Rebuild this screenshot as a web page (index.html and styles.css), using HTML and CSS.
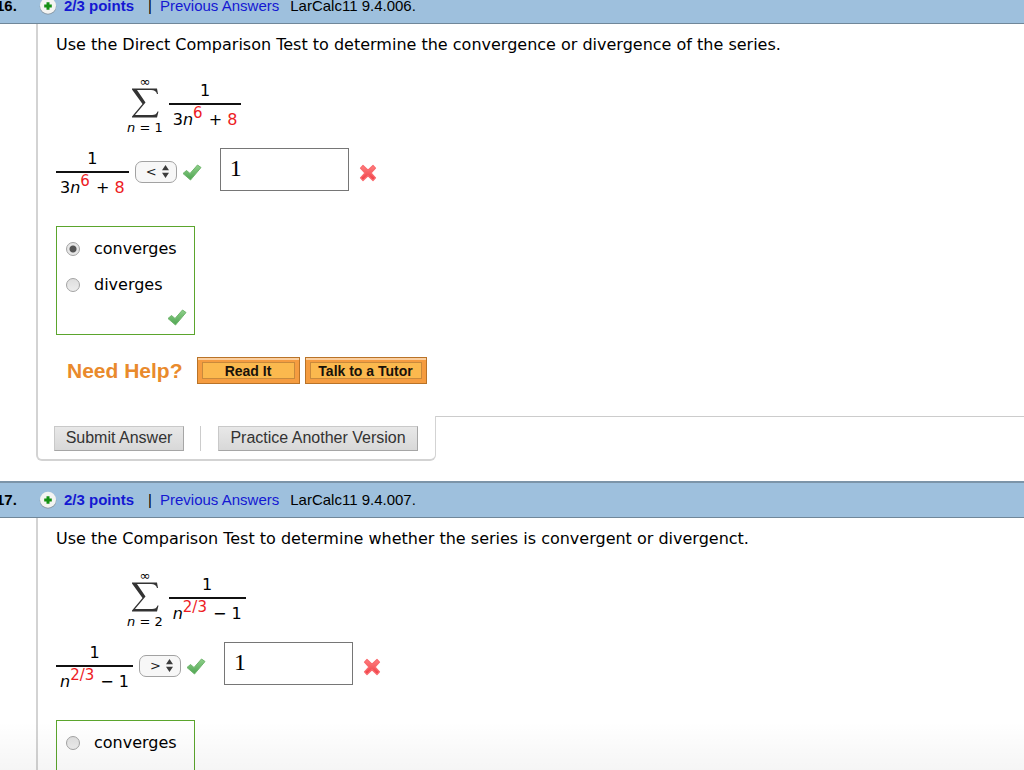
FILE: index.html
```html
<!DOCTYPE html>
<html lang="en">
<head>
<meta charset="utf-8">
<title>LarCalc11 9.4</title>
<link rel="stylesheet" href="styles.css">
</head>
<body>
<svg class="defs" width="0" height="0" aria-hidden="true">
  <defs>
    <linearGradient id="green" x1="0" y1="0" x2="0" y2="1"><stop offset="0" stop-color="#8fd08a"/><stop offset="1" stop-color="#4fa552"/></linearGradient>
    <linearGradient id="red" x1="0" y1="0" x2="0" y2="1"><stop offset="0" stop-color="#ff8080"/><stop offset="1" stop-color="#ee3e44"/></linearGradient>
    <symbol id="check" viewBox="0 0 20 17"><path d="M1 9.5 L4.5 6.5 L8 9.5 L15.5 1 L19 3.5 L8.5 16 Z" fill="url(#green)" stroke="#6fb56c" stroke-width="1" stroke-linejoin="round"/></symbol>
    <symbol id="cross" viewBox="0 0 17 18"><path d="M3.5 1.5 L8.5 6.2 L13.5 1.5 L16 4.2 L11.5 9 L16 13.8 L13.5 16.5 L8.5 11.8 L3.5 16.5 L1 13.8 L5.5 9 L1 4.2 Z" fill="url(#red)" stroke="#fa6a6e" stroke-width="1.2" stroke-linejoin="round"/></symbol>
    <symbol id="sigma" viewBox="0 0 28 30"><path d="M1 .5 H26 L27 6 H26 Q25 2 20 2 H6 L14.5 14.5 L4 27 H21 Q25.5 27 26.5 23.5 H27.5 L26 29.5 H1 V28.5 L11.5 16 L1 1.5 Z" fill="#333"/></symbol>
    <symbol id="plus" viewBox="0 0 18 18"><circle cx="9" cy="9.5" r="8.3" fill="#8c9caa"/><circle cx="9" cy="8.7" r="8" fill="#f4f4f2"/><path d="M7.5 5.2h3v2.3h2.3v3h-2.3v2.3h-3v-2.3H5.2v-3h2.3z" fill="#149014"/></symbol>
    <symbol id="arrows" viewBox="0 0 8 15"><path d="M0 6 L4 0 L8 6Z M0 9 L4 15 L8 9Z" fill="#3c3c3c"/></symbol>
  </defs>
</svg>
<main class="page">
  <section class="question">
    <header class="bar">
      <b class="number">16.</b>
      <svg class="plus"><use href="#plus"/></svg>
      <a class="points" href="#points">2/3 points</a>
      <span class="divider">|</span>
      <a class="previous" href="#previous">Previous Answers</a>
      <span>LarCalc11 9.4.006.</span>
    </header>
    <div class="content">
      <p class="prompt">Use the Direct Comparison Test to determine the convergence or divergence of the series.</p>
      <div class="series">
        <div class="sum"><span class="upper">∞</span><svg class="sigma"><use href="#sigma"/></svg><span class="lower"><i>n</i> = 1</span></div>
        <div class="fraction"><span class="top">1</span><span class="bottom">3<i>n</i><sup>6</sup> + <em>8</em></span></div>
      </div>
      <div class="answer">
        <div class="fraction"><span class="top">1</span><span class="bottom">3<i>n</i><sup>6</sup> + <em>8</em></span></div>
        <div class="picker"><select aria-label="Comparison"><option>&lt;</option></select><svg class="arrows"><use href="#arrows"/></svg></div>
        <svg class="check"><use href="#check"/></svg>
        <input class="entry" type="text" value="1" aria-label="Comparison term">
        <svg class="cross"><use href="#cross"/></svg>
      </div>
      <div class="choices">
        <label class="choice"><input type="radio" name="q16" checked>converges</label>
        <label class="choice"><input type="radio" name="q16">diverges</label>
        <svg class="check"><use href="#check"/></svg>
      </div>
      <div class="help">
        <span class="help-title">Need Help?</span>
        <button class="help-button" type="button">Read It</button>
        <button class="help-button" type="button">Talk to a Tutor</button>
      </div>
    </div>
    <footer class="actions">
      <div class="tab">
        <button class="action" type="button">Submit Answer</button>
        <span class="rule"></span>
        <button class="action wide" type="button">Practice Another Version</button>
      </div>
      <div class="edge"></div>
    </footer>
  </section>
  <section class="question">
    <header class="bar">
      <b class="number">17.</b>
      <svg class="plus"><use href="#plus"/></svg>
      <a class="points" href="#points">2/3 points</a>
      <span class="divider">|</span>
      <a class="previous" href="#previous">Previous Answers</a>
      <span>LarCalc11 9.4.007.</span>
    </header>
    <div class="content">
      <p class="prompt">Use the Comparison Test to determine whether the series is convergent or divergenct.</p>
      <div class="series">
        <div class="sum"><span class="upper">∞</span><svg class="sigma"><use href="#sigma"/></svg><span class="lower"><i>n</i> = 2</span></div>
        <div class="fraction"><span class="top">1</span><span class="bottom"><i>n</i><sup>2/3</sup> − 1</span></div>
      </div>
      <div class="answer">
        <div class="fraction"><span class="top">1</span><span class="bottom"><i>n</i><sup>2/3</sup> − 1</span></div>
        <div class="picker"><select aria-label="Comparison"><option>&gt;</option></select><svg class="arrows"><use href="#arrows"/></svg></div>
        <svg class="check"><use href="#check"/></svg>
        <input class="entry" type="text" value="1" aria-label="Comparison term">
        <svg class="cross"><use href="#cross"/></svg>
      </div>
      <div class="choices">
        <label class="choice"><input type="radio" name="q17">converges</label>
      </div>
    </div>
  </section>
</main>
</body>
</html>
```

FILE: styles.css
```css
* { box-sizing: border-box; }
body { margin: 0; background: #fff; color: #000; font: 16px/20px Verdana, "DejaVu Sans", sans-serif; }
svg { display: block; flex: none; }
.defs { position: absolute; }
.page { position: relative; height: 100vh; overflow: hidden; }
.page::after {
  content: ""; position: absolute; left: 0; right: 0; bottom: 0; height: 48px;
  background: linear-gradient(rgba(0, 0, 0, 0), rgba(0, 0, 0, .04)); pointer-events: none;
}
.question { margin-bottom: 20px; }
.question:first-child { margin-top: -13px; }

.bar {
  display: flex; align-items: center; height: 37px; white-space: nowrap;
  background: #9ec0dd; border-top: 2px solid #7c94a8; border-bottom: 1px solid #708799;
  font: 15px/18px Arial, "Liberation Sans", sans-serif;
}
.number { width: 43px; margin-left: -4px; }
.plus { width: 18px; height: 18px; margin-right: 7px; }
.bar a { color: #1418d2; text-decoration: none; }
.points { font-weight: bold; width: 84px; }
.divider { width: 12px; }
.previous { margin-right: 11px; }

.content { margin-left: 36px; padding: 11px 0 32px 18px; border-left: 2px solid #d3d3d3; }
.prompt { margin: 0 0 21px; }
.series { display: flex; margin-left: 71px; gap: 6px; }
.sum { display: flex; flex-direction: column; align-items: center; font-size: 13px; white-space: nowrap; }
.upper { line-height: 12px; }
.sigma { width: 28px; height: 30px; }
.lower { line-height: 16px; padding-top: 2px; }
.fraction { display: flex; flex-direction: column; text-align: center; line-height: 22px; white-space: nowrap; }
.series .fraction { margin-top: 3px; }
.top { padding: 1px 0; }
.bottom { border-top: 2px solid #111; padding: 4px 4px 0; margin-bottom: -1px; }
.fraction sup { margin-right: 1px; color: #ed1c24; font-size: 15px; line-height: 0; vertical-align: 7px; }
.fraction em { color: #ed1c24; font-style: normal; }

.answer { display: flex; align-items: center; margin-top: 11px; }
.picker { position: relative; margin: 0 5px 2px 6px; }
select {
  display: block; appearance: none; width: 42px; height: 22px; margin: 0; padding: 0 0 0 10px;
  border: 1px solid #a2a2a2; border-radius: 7px; background: #f7f7f7; color: #222;
  font: 13px/18px Verdana, "DejaVu Sans", sans-serif;
}
.arrows { position: absolute; right: 8px; top: 3px; width: 7px; height: 15px; pointer-events: none; }
.check { width: 20px; height: 17px; }
.entry {
  width: 129px; height: 43px; margin: 0 10px 6px 18px; padding: 0 9px 2px;
  border: 1px solid #767676; background: #fff; font: 24px/28px "Liberation Serif", serif;
}
.cross { width: 18px; height: 18px; }

.choices {
  display: flex; flex-direction: column; width: fit-content; min-width: 139px; min-height: 109px;
  margin-top: 28px; padding: 4px 7px 4px 9px; border: 1px solid #5ba52d;
}
.choice { display: flex; align-items: center; gap: 14px; height: 36px; line-height: 20px; }
.choice input {
  appearance: none; width: 14px; height: 14px; margin: 0; border: 1px solid #a3a3a3; border-radius: 50%;
  background: linear-gradient(#dedede, #ededed);
}
.choice input:checked { background: radial-gradient(circle, #555 0 3px, #e6e6e6 4px); }
.choices .check { margin: 6px 0 0 auto; }

.help { display: flex; align-items: center; gap: 5px; margin-top: 22px; font-family: Arial, "Liberation Sans", sans-serif; }
.help-title { margin: 0 9px 0 11px; color: #e98a2c; font-size: 21px; font-weight: bold; line-height: 26px; }
.help-button {
  min-width: 103px; height: 27px; padding: 0 9px; border: 1px solid #b97328;
  background: #fbb94e; box-shadow: inset 0 2px #fbcfa0, inset 0 0 0 4px #f59c40, inset 0 0 0 5px #c98a3c;
  font: bold 14px/18px Arial, "Liberation Sans", sans-serif; color: #17120a;
}
.help-button + .help-button { min-width: 122px; }

.actions { display: flex; margin-left: 36px; }
.tab {
  display: flex; align-items: center; height: 45px; padding: 1px 17px 0 16px;
  border: solid #d3d3d3; border-width: 0 1px 2px 2px; border-radius: 0 0 6px 6px;
}
.edge { flex: 1; border-top: 1px solid #ccc; }
.action {
  min-width: 130px; height: 25px; padding: 0 8px; white-space: nowrap; color: #333;
  border: 1px solid; border-color: #c9c9c9 #a6a6a6 #a6a6a6 #c9c9c9;
  background: linear-gradient(#e8e8e8, #d8d8d8); font: 16px/20px Arial, "Liberation Sans", sans-serif;
}
.action.wide { min-width: 200px; }
.rule { width: 1px; height: 25px; margin: 0 17px 0 16px; background: #ccc; }
```
